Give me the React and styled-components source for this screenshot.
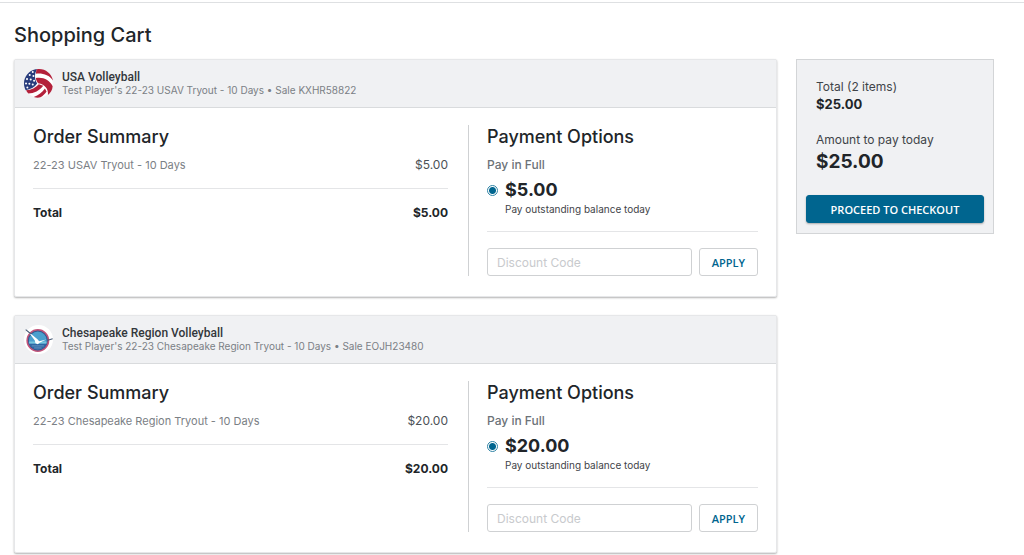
import React, { useState } from 'react'
import styled, { createGlobalStyle } from 'styled-components'

const GlobalStyle = createGlobalStyle`
*, *::before, *::after {
    box-sizing:border-box;
}
body {
    margin:0;
    background-color:#fff;
    color:#212529;
    font-family:Inter, "Liberation Sans", sans-serif;
    font-size:12px;
    line-height:16px;
}
h1, h2, h3, p, dl, dt, dd {
    margin:0;
}
`

const Page = styled.div`
    padding-top:2px;
`

const Content = styled.main`
    padding:20px 30px 2px 14px;
    border-top:1px solid #dee0e2;
`

const PageTitle = styled.h1`
    margin-bottom:12px;
    font-size:20px;
    font-weight:500;
    line-height:24px;
`

const Columns = styled.div`
    display:grid;
    grid-template-columns:minmax(0, 1fr) 198px;
    align-items:start;
    gap:19px;
`

const OrderList = styled.div`
    display:flex;
    flex-direction:column;
    gap:18px;
`

const Card = styled.section`
    border:1px solid #e6e7e9;
    border-radius:2px;
    background-color:#fff;
    box-shadow:0 1px 2px rgba(0, 0, 0, 0.3);
`

const CardHeader = styled.header`
    display:flex;
    align-items:center;
    gap:9px;
    height:48px;
    padding:0 9px;
    border-bottom:1px solid #d9dbdd;
    background-color:#f0f1f3;
    svg {
        flex-shrink:0;
        width:29px;
        height:29px;
    }
`

const OrgName = styled.h2`
    color:#33373b;
    font-family:Roboto, sans-serif;
    font-size:12px;
    font-weight:500;
    line-height:14px;
`

const OrgDetails = styled.p`
    color:#7b8085;
    font-size:10px;
    line-height:13px;
`

const CardBody = styled.div`
    display:grid;
    grid-template-columns:minmax(0, 3fr) minmax(0, 2fr);
    padding:17px 18px 20px;
`

const Summary = styled.div`
    padding-right:20px;
`

const Payment = styled.form`
    padding-left:18px;
    border-left:1px solid #cfd1d3;
`

const SectionTitle = styled.h3`
    margin-bottom:8px;
    font-size:18px;
    font-weight:500;
    line-height:24px;
`

const SummaryRow = styled.div`
    display:flex;
    justify-content:space-between;
    font-weight:${({ $total }) => ($total ? 700 : 400)};
    dt {
        color:${({ $total }) => ($total ? '#212529' : '#7b8085')};
        font-size:${({ $total }) => ($total ? '12px' : '11px')};
    }
    dd {
        color:${({ $total }) => ($total ? '#212529' : '#4c5156')};
    }
`

const Divider = styled.hr`
    height:1px;
    margin:15px 0 16px;
    border:0;
    background-color:#e4e5e7;
`

const PayLabel = styled.p`
    margin-bottom:5px;
    color:#6c7278;
    font-weight:500;
`

const PayOption = styled.label`
    display:grid;
    grid-template-columns:11px 1fr;
    align-items:center;
    column-gap:7px;
    cursor:pointer;
    strong {
        font-size:18px;
        font-weight:700;
        line-height:24px;
    }
    span {
        grid-column:2;
        color:#3f4449;
        font-size:10px;
        line-height:14px;
    }
`

const Radio = styled.input`
    appearance:none;
    width:11px;
    height:11px;
    margin:0;
    border:1px solid #2e83a5;
    border-radius:50%;
    background-color:#fff;
    &:checked {
        background-image:radial-gradient(circle, #00658f 3px, transparent 4px);
    }
`

const DiscountRow = styled.div`
    display:flex;
    gap:7px;
`

const DiscountInput = styled.input`
    flex:1;
    min-width:0;
    height:28px;
    padding:0 9px;
    border:1px solid #cfd1d3;
    border-radius:3px;
    color:#212529;
    font-family:inherit;
    font-size:12px;
    &::placeholder {
        color:#c8cacd;
        opacity:1;
    }
`

const Button = styled.button`
    height:28px;
    padding:0 12px;
    border:1px solid #cfd1d3;
    border-radius:3px;
    background-color:#fff;
    color:#00658f;
    font-family:"Open Sans", "Noto Sans", sans-serif;
    font-size:11px;
    font-weight:600;
    cursor:pointer;
`

const CheckoutButton = styled(Button)`
    width:100%;
    border-color:#00658f;
    background-color:#00658f;
    color:#fff;
    box-shadow:0 1px 2px rgba(0, 0, 0, 0.3);
`

const Sidebar = styled.aside`
    padding:19px 9px 10px;
    border:1px solid #d3d5d7;
    background-color:#f0f1f3;
`

const Totals = styled.dl`
    margin-bottom:19px;
    padding:0 10px;
    dt {
        color:#3f4449;
    }
`

const TotalValue = styled.dd`
    font-size:${({ $large }) => ($large ? '19px' : '13px')};
    font-weight:700;
    line-height:${({ $large }) => ($large ? '28px' : '18px')};
    & + dt {
        margin-top:19px;
    }
`

const UsaLogo = () => (
    <svg viewBox="0 0 86 86" aria-hidden="true">
        <circle cx="43" cy="43" r="42" fill="#fff" />
        <path fill="#283c7c" d="M34 1C15 5 0 22 0 43c0 8 2 14 5 20 14-3 27-9 34-20-8-13-9-29 0-42z" />
        <path fill="#b3203a" d="M38 1c22-4 43 11 48 33C74 18 57 12 36 14c-1-5 0-9 2-13z" />
        <path fill="#b3203a" d="M35 27c22-4 41 6 50 24-1 11-6 20-14 26 2-17-8-32-29-35-4-4-6-9-7-15z" />
        <path fill="#b3203a" d="M6 63c16-1 29-8 38-18l13 5C46 64 30 73 13 73c-3-3-5-6-7-10z" />
        <path fill="#b3203a" d="M29 83c14-5 25-13 33-25l5 9c-5 8-11 13-18 17-7 2-14 1-20-1z" />
        <g fill="#fff">
            <circle cx="26" cy="9" r="3" />
            <circle cx="17" cy="18" r="3" />
            <circle cx="28" cy="21" r="3" />
            <circle cx="9" cy="30" r="3" />
            <circle cx="20" cy="31" r="3" />
            <circle cx="30" cy="35" r="3" />
            <circle cx="6" cy="43" r="3" />
            <circle cx="16" cy="44" r="3" />
            <circle cx="26" cy="46" r="3" />
            <circle cx="10" cy="55" r="3" />
        </g>
    </svg>
)

const ChesapeakeLogo = () => (
    <svg viewBox="0 0 86 86" aria-hidden="true">
        <circle cx="43" cy="43" r="43" fill="#fff" />
        <circle cx="41" cy="46" r="31" fill="#4a9fce" stroke="#c0547a" strokeWidth="6" />
        <circle cx="41" cy="46" r="28" fill="none" stroke="#34598f" strokeWidth="3" />
        <path fill="#2f65a3" d="M15 55h52c-4 11-14 18-26 18S19 66 15 55z" />
        <path fill="#76c6df" d="M15 49h52v6H15z" />
        <path fill="none" stroke="#7cabd0" strokeWidth="2" d="M23 62h36M30 68h22" />
        <path fill="#fff" d="M13 20l27 22 5 6 21-5-20 10-5 4-7-3-2-8z" />
        <path fill="none" stroke="#435773" strokeWidth="3" d="M5 14l15 12M70 45l15-4" />
    </svg>
)

const orders = [
    {
        sale: 'KXHR58822',
        org: 'USA Volleyball',
        item: '22-23 USAV Tryout - 10 Days',
        price: '$5.00',
        Logo: UsaLogo,
    },
    {
        sale: 'EOJH23480',
        org: 'Chesapeake Region Volleyball',
        item: '22-23 Chesapeake Region Tryout - 10 Days',
        price: '$20.00',
        Logo: ChesapeakeLogo,
    },
]

const OrderCard = ({ order }) => {
    const [code, setCode] = useState('')
    const { sale, org, item, price, Logo } = order

    return (
        <Card>
            <CardHeader>
                <Logo />
                <div>
                    <OrgName>{org}</OrgName>
                    <OrgDetails>Test Player's {item} • Sale {sale}</OrgDetails>
                </div>
            </CardHeader>
            <CardBody>
                <Summary>
                    <SectionTitle>Order Summary</SectionTitle>
                    <dl>
                        <SummaryRow>
                            <dt>{item}</dt>
                            <dd>{price}</dd>
                        </SummaryRow>
                    </dl>
                    <Divider />
                    <dl>
                        <SummaryRow $total>
                            <dt>Total</dt>
                            <dd>{price}</dd>
                        </SummaryRow>
                    </dl>
                </Summary>
                <Payment onSubmit={(e) => e.preventDefault()}>
                    <SectionTitle>Payment Options</SectionTitle>
                    <PayLabel>Pay in Full</PayLabel>
                    <PayOption>
                        <Radio type="radio" name={`payment-${sale}`} defaultChecked />
                        <strong>{price}</strong>
                        <span>Pay outstanding balance today</span>
                    </PayOption>
                    <Divider />
                    <DiscountRow>
                        <DiscountInput
                            type="text"
                            aria-label="Discount Code"
                            placeholder="Discount Code"
                            value={code}
                            onChange={(e) => setCode(e.target.value)}
                        />
                        <Button type="submit">APPLY</Button>
                    </DiscountRow>
                </Payment>
            </CardBody>
        </Card>
    )
}

const App = () => {
    return (
        <>
            <GlobalStyle />
            <Page>
                <Content>
                    <PageTitle>Shopping Cart</PageTitle>
                    <Columns>
                        <OrderList>
                            {orders.map((order) => (
                                <OrderCard key={order.sale} order={order} />
                            ))}
                        </OrderList>
                        <Sidebar>
                            <Totals>
                                <dt>Total (2 items)</dt>
                                <TotalValue>$25.00</TotalValue>
                                <dt>Amount to pay today</dt>
                                <TotalValue $large>$25.00</TotalValue>
                            </Totals>
                            <CheckoutButton type="button">PROCEED TO CHECKOUT</CheckoutButton>
                        </Sidebar>
                    </Columns>
                </Content>
            </Page>
        </>
    )
}

export default App
